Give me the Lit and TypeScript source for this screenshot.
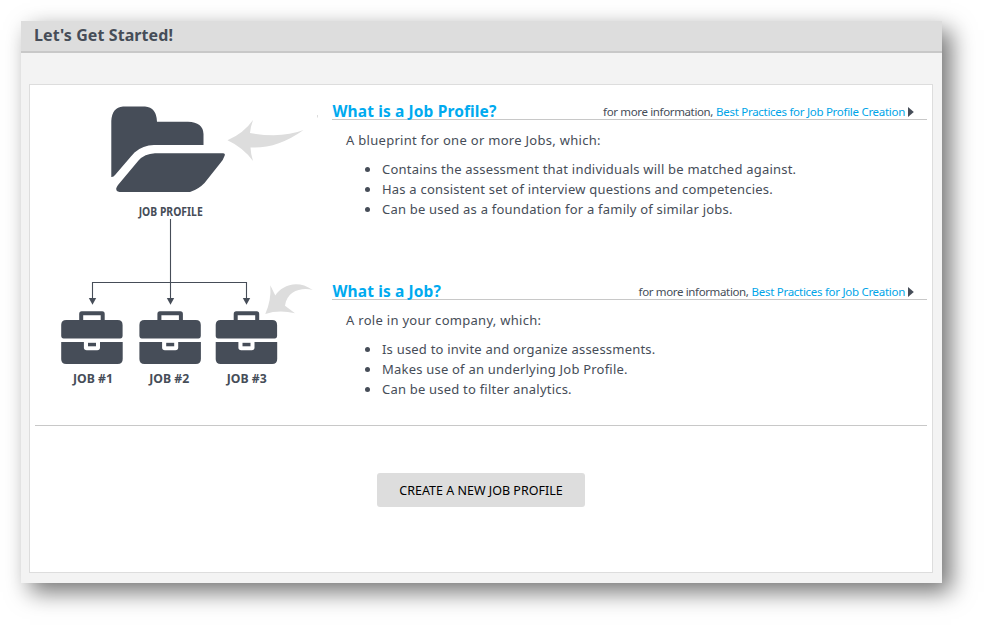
import { LitElement, html, css, svg } from "lit";
import { customElement, property } from "lit/decorators.js";

const INK = "#464d58";

@customElement("job-diagram")
class JobDiagram extends LitElement {
  static styles = css`
    :host { display: block; width: 297px; height: 340px; }
    svg { display: block; }
    .ink { fill: #464d58; }
    .line { fill: none; stroke: #464d58; stroke-width: 1.1; }
    .hint { fill: #ddd; }
    .knock { fill: #fff; }
    .label { font: 700 11.5px "Noto Sans", "Open Sans", sans-serif; fill: #464d58; }
  `;

  private briefcase(x: number) {
    return svg`<g transform="translate(${x} 311)">
      <path class="ink" fill-rule="evenodd" d="M18 10V3Q18 .3 20.500 .3H41Q43.500 .3 43.500 3V10ZM22 4.300V9H39.500V4.300Z"/>
      <path class="ink" d="M5 9H56.500Q61.400 9 61.400 14V24.500Q61.400 27.500 59 27.500H2.400Q0 27.500 0 24.500V14Q0 9 5 9Z"/>
      <path class="ink" d="M0 31H61.500V48Q61.500 53 56.500 53H5Q0 53 0 48Z"/>
      <path class="knock" d="M22.700 30H38.800V36.500Q38.800 39.200 36 39.200H25.500Q22.700 39.200 22.700 36.500Z"/>
      <path class="ink" d="M26.800 31.800H34.800V35.300H26.800Z"/>
    </g>`;
  }

  render() {
    return html`<svg width="297" height="340" viewBox="35 85 297 340">
      <path class="ink" d="M111.300 177V121Q112 107.500 123 106.600H145Q156.500 107.500 157 121.800H188Q203 122.300 203.500 134V145H154Q143 145 134.500 152.500Q133 154 115.500 174.500Q113 177.500 111.300 177Z"/>
      <path class="ink" d="M155 153.200H223Q225.500 153.500 224.700 155.500Q223.500 159.500 220 163.500L204.500 183Q198.500 189.300 190 192H119.500Q116 191.500 116.200 188.500Q116.500 187 118 185L138.500 160.500Q144.500 153.700 155 153.200Z"/>
      <path class="hint" d="M227.500 140.300Q244 133 253 120Q250.500 127 250 133Q282 138.500 303.500 130Q277 149 250.500 147.500Q250.800 154.500 253 161Q243 147.500 227.500 140.300Z"/>
      <path class="hint" d="M265.300 314Q271.500 300 270.300 285.300L275.300 295.500C281 286 297 278.500 312.700 290C303 287 287 290 285 305.700L295 313.300Q279 309.500 265.300 314Z"/>
      <path class="hint" d="M317 115h1v2l-1 1z"/>
      <path class="line" d="M170.500 219V299M92.500 299V282.500H246.500V299"/>
      ${[92.5, 170.5, 246.5].map((x) => svg`<path class="ink" d="M${x - 3.7} 298h7.400l-3.700 6.800z"/>`)}
      ${[61.2, 139.4, 215.7].map((x) => this.briefcase(x))}
      <text class="label" x="138.700" y="215.700" textLength="64" lengthAdjust="spacingAndGlyphs">JOB PROFILE</text>
      <text class="label" x="73" y="382.700" textLength="40" lengthAdjust="spacingAndGlyphs">JOB #1</text>
      <text class="label" x="149.300" y="382.700" textLength="40" lengthAdjust="spacingAndGlyphs">JOB #2</text>
      <text class="label" x="226.700" y="382.700" textLength="40" lengthAdjust="spacingAndGlyphs">JOB #3</text>
    </svg>`;
  }
}

@customElement("info-section")
class InfoSection extends LitElement {
  @property() heading = "";
  @property() link = "";
  @property() lead = "";
  @property({ attribute: false }) points: string[] = [];

  static styles = css`
    :host { display: block; height: 180px; color: #464d58; }
    header { display: flex; align-items: flex-end; justify-content: space-between; height: 18px; padding-right: 13px; border-bottom: 1px solid #c8c8c8; white-space: nowrap; }
    h2 { margin: 0 0 -2px 0.5px; font-size: 15.5px; line-height: 20px; letter-spacing: 0.12px; color: #00aaef; }
    .more { display: flex; align-items: center; font-size: 11.5px; line-height: 16px; letter-spacing: -0.29px; margin-bottom: -1px; }
    .more span { margin-right: 3px; letter-spacing: -0.36px; }
    .more a { color: #00a4e8; }
    .more svg { margin-left: 3px; }
    .lead { margin: 10px 0 9px 14px; font-size: 13px; line-height: 20px; letter-spacing: 0.29px; }
    ul { margin: 0; padding-left: 50px; font-size: 13px; line-height: 20px; letter-spacing: 0.21px; white-space: nowrap; list-style: none; }
    li { display: flex; align-items: center; }
    li::before { content: ""; width: 5px; height: 5px; border-radius: 50%; background: #464d58; margin: 1px 12px 0 -17px; }
  `;

  render() {
    return html`
      <header>
        <h2>${this.heading}</h2>
        <div class="more"><span>for more information,</span><a>${this.link}</a><svg width="6" height="10" viewBox="0 0 6 10"><path fill=${INK} d="M0 0 5.800 5 0 10z"/></svg></div>
      </header>
      <p class="lead">${this.lead}</p>
      <ul>${this.points.map((p) => html`<li>${p}</li>`)}</ul>
    `;
  }
}

@customElement("app-root")
class AppRoot extends LitElement {
  static styles = css`
    :host { display: block; box-sizing: border-box; height: 625px; padding: 21px 42px 42px 21px; background: #fff; overflow: hidden; font-family: "Noto Sans", "Open Sans", sans-serif; color: #464d58; }
    .window { box-sizing: border-box; width: 921px; height: 562px; background: #f3f3f3; box-shadow: 9px 9px 22px rgba(0, 0, 0, 0.55); }
    .title { box-sizing: border-box; height: 32px; margin: 0; padding-left: 13px; border-bottom: 2px solid #c8c8c8; background: #ddd; font-size: 16px; font-weight: 700; line-height: 28px; letter-spacing: 0.08px; }
    .card { box-sizing: border-box; width: 904px; height: 489px; margin: 31px 0 0 8px; padding: 0 5px; border: 1px solid #ddd; background: #fff; }
    .intro { display: flex; height: 340px; border-bottom: 1px solid #c8c8c8; }
    .copy { flex: 1; padding-top: 16px; }
    .actions { display: flex; justify-content: center; padding-top: 47px; }
    button { width: 208px; height: 34px; padding: 0; border: 0; border-radius: 3px; background: #ddd; color: #000; font: 12.5px "Noto Sans", "Open Sans", sans-serif; letter-spacing: 0; }
  `;

  render() {
    return html`
      <div class="window">
        <h1 class="title">Let's Get Started!</h1>
        <div class="card">
          <div class="intro">
            <job-diagram></job-diagram>
            <div class="copy">
              <info-section
                heading="What is a Job Profile?"
                link="Best Practices for Job Profile Creation"
                lead="A blueprint for one or more Jobs, which:"
                .points=${[
                  "Contains the assessment that individuals will be matched against.",
                  "Has a consistent set of interview questions and competencies.",
                  "Can be used as a foundation for a family of similar jobs.",
                ]}
              ></info-section>
              <info-section
                heading="What is a Job?"
                link="Best Practices for Job Creation"
                lead="A role in your company, which:"
                .points=${[
                  "Is used to invite and organize assessments.",
                  "Makes use of an underlying Job Profile.",
                  "Can be used to filter analytics.",
                ]}
              ></info-section>
            </div>
          </div>
          <div class="actions"><button>CREATE A NEW JOB PROFILE</button></div>
        </div>
      </div>
    `;
  }
}
